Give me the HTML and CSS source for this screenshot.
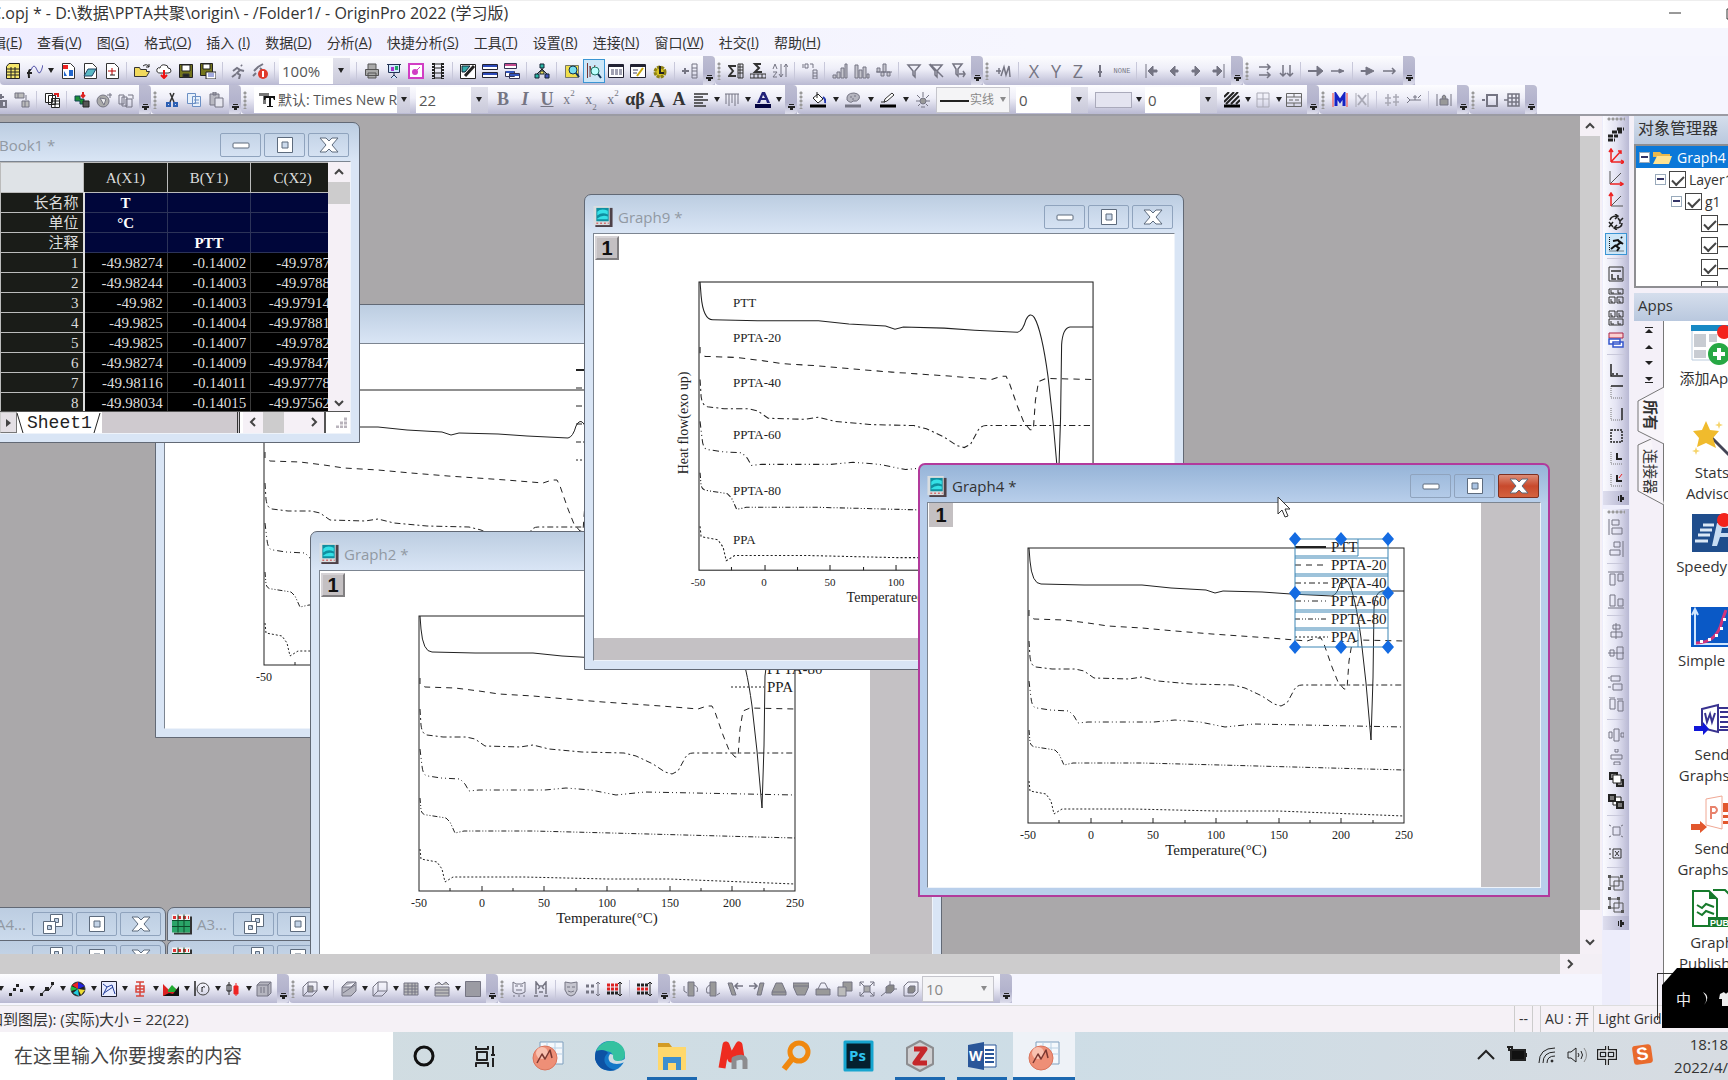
FILE: index.html
```html
<!DOCTYPE html>
<html lang="zh-CN">

<head>
    <meta charset="utf-8">
    <meta name="viewport" content="width=device-width">
    <title>OriginPro 2022</title>
    <link rel="stylesheet" href="styles.css">
</head>

<body>
    <svg class="defs" aria-hidden="true">
        <!-- DSC curves, shared by every graph window: 376 x 275 plot box -->
        <g id="curves">
            <rect width="376" height="275"/>
            <path d="M1 0L2 13Q4 36 13 36L56 37H114L143 40L178 42L187 45L195 43L234 44L263 46L304 48Q309 47 312 36Q316 28 320 34Q327 46 333 90L338 135L343 192L345 130L346 60Q347 44 354 43H376"/>
            <path stroke-dasharray="6 5" d="M1 62V68L6 71L36 72L60 75L80 78L114 80L147 83L184 86L242 90L267 92L279 93L288 90L293 90L296 96L304 119L310 134L316 141H319L321 113L324 95L331 92L376 93"/>
            <path stroke-dasharray="6 3 2 3" d="M1 93L2 109Q3 118 8 119L24 121L47 121L56 123L66 130L101 131L114 129L130 133L163 136L205 137L217 140L234 148L246 156L253 158L259 155L265 144Q268 137 274 137H376"/>
            <path stroke-dasharray="6 3 1 3 1 3" d="M1 133L3 150Q4 160 9 160L22 162L41 163L46 168L50 175L60 174H126L147 172L172 174L197 179L226 176L376 179"/>
            <path stroke-dasharray="5 2 1 2 1 2" d="M1 182L2 194Q3 199 8 199L27 202L31 206L36 217L45 215H114L192 217L376 222"/>
            <path stroke-dasharray="2 2" d="M1 233L2 243L18 246L23 253L26 266L34 261H105L188 263H250L376 268"/>
            <path d="M63 275v-5m62 5v-5m63 5v-5m63 5v-5m62 5v-5M31 275v-3m63 3v-3m63 3v-3m62 3v-3m63 3v-3m63 3v-3"/>
        </g>
        <g id="axis-text" class="axis">
            <text x="0" y="291">-50</text><text x="63" y="291">0</text><text x="125" y="291">50</text>
            <text x="188" y="291">100</text><text x="251" y="291">150</text><text x="313" y="291">200</text>
            <text x="376" y="291">250</text><text class="axis-title" x="188" y="307">Temperature(°C)</text>
        </g>
        <g id="legend">
            <path stroke-width="2" d="M0 0H31"/><path stroke-dasharray="6 5" d="M0 18H33"/><path stroke-dasharray="6 3 2 3" d="M0 36H33"/>
            <path stroke-dasharray="6 3 1 3 1 3" d="M0 54H33"/><path stroke-dasharray="5 2 1 2 1 2" d="M0 72H33"/><path stroke-dasharray="2 2" d="M0 90H33"/>
            <text x="36" y="5">PTT</text><text x="36" y="23">PPTA-20</text><text x="36" y="41">PPTA-40</text>
            <text x="36" y="59">PPTA-60</text><text x="36" y="77">PPTA-80</text><text x="36" y="95">PPA</text>
        </g>
        <symbol id="graph-icon" viewBox="0 0 20 22">
            <path fill="#4d4148" d="M2 2h18v20H2z"/><path fill="#d9dde0" d="M0 0h17v20H0z"/><path fill="#0f8fa0" d="M3 2h13v14H3z"/>
            <path fill="#35e0e6" d="M4 6q4-4 11-1v4q-6-3-11 1zM4 13q5-4 11-2v3H4z"/><path stroke="#c33" stroke-dasharray="2 2" d="M3 18h13"/>
        </symbol>
        <symbol id="sheet-icon" viewBox="0 0 20 20">
            <path fill="#333" d="M2 2h18v18H2z"/><path fill="#f2f2f2" d="M0 0h18v18H0z"/><path fill="#2aa468" d="M0 6h18v12H0z"/>
            <path stroke="#d33" stroke-width="3" stroke-dasharray="3 2" d="M1 3h16"/><path stroke="#0c4a2a" d="M0 6h18M0 12h18M6 0v18M12 0v18"/>
        </symbol>
        <symbol id="w-min" viewBox="0 0 20 20"><rect x="2" y="8" width="16" height="5" rx="1" fill="#fff" stroke="#5d6b7d"/></symbol>
        <symbol id="w-max" viewBox="0 0 20 20"><path fill="#fff" stroke="#5d6b7d" fill-rule="evenodd" d="M2.500 2.500h15v15h-15zM7 7h6v6H7z"/></symbol>
        <symbol id="w-close" viewBox="0 0 20 20"><path fill="#fff" stroke="#5d6b7d" d="M1 3h6l3 3 3-3h6l-6 7 6 7h-6l-3-3-3 3H1l6-7z"/></symbol>
        <symbol id="w-restore" viewBox="0 0 20 20"><g fill="#fff" stroke="#5d6b7d" fill-rule="evenodd"><path d="M7.500 .5h12v12h-12zM11.500 4.500h4v4h-4z"/><path d="M.5 7.500h12v12H.5zM4.500 11.500h4v4h-4z"/></g></symbol>
        <symbol id="origin-logo" viewBox="0 0 32 32">
            <path fill="#f4f8fc" stroke="#7f9fbe" d="M8 2h23v22H8z"/><path stroke="#b9d0e4" d="M8 8h23M8 14h23M15 2v22M23 2v22"/>
            <circle cx="13" cy="18" r="12" fill="#ee8f77" stroke="#d9745c"/><circle cx="10" cy="13" r="6" fill="#f9c1b0" stroke="none"/><path fill="none" stroke="#7a3730" stroke-width="1.500" d="M5 23l5-9 3 5 5-9 2 8"/>
        </symbol>
    </svg>

    <header class="titlebar">
        <h1>C.opj * - D:\数据\PPTA共聚\origin\ - /Folder1/ - OriginPro 2022 (学习版)</h1>
        <button aria-label="最小化"><svg><path d="M2 6h12"/></svg></button>
        <button aria-label="最大化"><svg><path d="M2 2h10v10H2z"/></svg></button>
    </header>

    <nav class="menu">
        <button>编辑(<u>E</u>)</button><button>查看(<u>V</u>)</button><button>图(<u>G</u>)</button><button>格式(<u>O</u>)</button>
        <button>插入 (<u>I</u>)</button><button>数据(<u>D</u>)</button><button>分析(<u>A</u>)</button><button>快捷分析(<u>S</u>)</button>
        <button>工具(<u>T</u>)</button><button>设置(<u>R</u>)</button><button>连接(<u>N</u>)</button><button>窗口(<u>W</u>)</button>
        <button>社交(<u>I</u>)</button><button>帮助(<u>H</u>)</button>
    </nav>

    <div class="bars">
        <div class="bar first">
            <button aria-label="新建工作簿"><svg><path fill="#f5e66b" stroke="#222" d="M1.500 3.500L4 .5h10.500v15h-13zM2 6h12M2 9h12M2 12h12M6 4v11M10 4v11"/></svg></button>
            <button aria-label="新建函数"><svg><path stroke="#222" stroke-width="2" d="M4 7Q1 6 2 15M0 10h5"/><path stroke="#55a" d="M4 7q3-8 6 0t6-5"/></svg></button><button class="dd" aria-label="更多函数"></button><i class="sp"></i>
            <button aria-label="新建Excel"><svg><path fill="#fff" stroke="#333" d="M2.500 .5h8l4 4v11h-12z"/><path fill="#e22" stroke="none" d="M3 2h5v4H3z"/><path fill="#26c" stroke="none" d="M4 8l3 5H4zM9 7h4v6H9z"/></svg></button>
            <button aria-label="新建布局"><svg><path fill="#fff" stroke="#333" d="M2.500 .5h8l4 4v11h-12z"/><path fill="#59b8c4" stroke="#246" d="M6 6h8l-4 7H2z"/></svg></button>
            <button aria-label="新建备注"><svg><path fill="#fff" stroke="#333" d="M2.500 .5h8l4 4v11h-12z"/><path stroke="#b00" d="M8 5v7M4 8h8"/><path stroke="#222" d="M6 12h5"/></svg></button><i class="sep"></i>
            <button aria-label="打开"><svg><path fill="#f1d95c" stroke="#333" d="M.5 13.500v-9h5l1 2h6v2h3l-3 5z"/><path stroke="#222" d="M9 3q4-3 6 1m0-3v3h-3"/></svg></button>
            <button aria-label="云"><svg><path fill="#fff" stroke="#333" d="M4 10q-4 0-3-4 1-2 3-1 1-4 5-3 3 0 3 3 3 0 3 3 0 2-3 2z"/><path stroke="#e11" stroke-width="2" d="M8 7v8M5 12l3 3 3-3"/></svg></button>
            <button aria-label="保存"><svg><path fill="#74751c" stroke="#222" d="M1.500 1.500h13v13h-13z"/><path fill="#fff" stroke="#222" d="M4 2h8v6H4z"/><path fill="#222" d="M5 11h6v3H5z"/></svg></button>
            <button aria-label="保存模板"><svg><path fill="#74751c" stroke="#222" d="M.5 .5h12v12H.5z"/><path fill="#fff" stroke="#222" d="M3 1h7v5H3zM6 9h10v7H6z"/><path stroke="#45b" d="M8 11h6M8 13h6"/></svg></button><i class="sep"></i>
            <button class="off" aria-label="重新计算"><svg><path stroke-width="2" d="M11 2l1 1M3 8l4-3 3 2-3 3 3 2-1 4M6 11l-4 3M10 7l4 1"/></svg></button>
            <button class="off" aria-label="停止计算"><svg><path stroke-width="2" d="M11 1L6 4 2 8M8 5l2 2M4 10l-3 3"/><circle cx="11" cy="11" r="5" fill="#e0392b" stroke="none"/><path stroke="#fff" stroke-width="2" d="M11 8v6"/></svg></button><i class="sep"></i>
            <label class="combo zoom"><select aria-label="缩放"><option>100%</option></select></label><i class="sep"></i>
            <button class="off" aria-label="打印"><svg><path fill="#aaa" stroke="#555" d="M4 6V1h8v5M1.500 6.500h13v6h-13zM4 10h8v5H4z"/></svg></button>
            <button aria-label="幻灯片"><svg><path fill="#cfe6ff" stroke="#235" d="M1 1.500h14M2.500 1.500v8h11v-8M8 10v2M5 15l3-3 3 3"/><path fill="#a3c" stroke="none" d="M5 4h3v4H5z"/><path fill="#2a6" stroke="none" d="M9 3h3v4H9z"/></svg></button>
            <button aria-label="视频"><svg><path fill="#fff" stroke="#d13ec4" stroke-width="2" d="M1 1h14v14H1z"/><circle cx="7" cy="9" r="3" fill="#d13ec4" stroke="none"/><path stroke="#d13ec4" d="M9 7l3-3"/></svg></button>
            <button aria-label="动画"><svg><path stroke="#222" stroke-width="2" d="M3 0v16M13 0v16" stroke-dasharray="2 1"/><path stroke="#222" d="M4.500 0v16M11.500 0v16M4 1h8M4 5h8M4 10h8M4 15h8"/></svg></button><i class="sep"></i>
            <button aria-label="自定义"><svg><path fill="#fff" stroke="#222" d="M.5 1.500h15v14H.5z"/><path fill="#3aa" stroke="#123" d="M2 3h8l-5 6H2z"/><path stroke="#222" stroke-width="3" d="M5 13l9-10"/></svg></button>
            <button aria-label="并排"><svg><path fill="#fff" stroke="#223" d="M.5 1.500h15v5H.5zM.5 9.500h15v5H.5z"/><path stroke="#2c49b8" stroke-width="2" d="M1 3h14M1 11h14"/></svg></button>
            <button aria-label="层叠"><svg><path fill="#fff" stroke="#335" d="M.5 .5h12v5H.5zM1.500 8.500h9v5h-9zM5.500 10.500h10v5h-10z"/><path stroke="#c24b8e" stroke-width="2" d="M1 2h11"/><path stroke="#35b" stroke-width="2" d="M2 9h8M6 12h9"/></svg></button><i class="sep"></i>
            <button aria-label="项目管理器"><svg><path stroke="#222" d="M8 4v4M3 11l5-5 5 5"/><path fill="#2bb6a6" stroke="#123" d="M6 1h4v4H6zM1 11h4v4H1z"/><path fill="#e9dc58" stroke="#123" d="M6 8h4v3H6z"/><path fill="#45b" stroke="#123" d="M11 11h4v4h-4z"/></svg></button><i class="sep"></i>
            <button aria-label="快速帮助"><svg><path fill="#f0de4b" stroke="#776" d="M1.500 2.500h13v12h-13z"/><circle cx="9" cy="7" r="4" fill="#7de" stroke="#135"/><path stroke="#135" stroke-width="2" d="M12 10l3 4"/></svg></button>
            <button class="on" aria-label="对象管理器"><svg><path stroke="#733" d="M1.500 0v15M4 14V3l2 8 3-9"/><circle cx="9" cy="8" r="4" fill="#bff" stroke="#276"/><path stroke="#135" stroke-width="2" d="M12 11l3 4"/></svg></button>
            <button aria-label="消息日志"><svg><path fill="#fff" stroke="#223" d="M.5 1.500h15v13H.5z"/><path stroke="#223" stroke-width="2" d="M1 3h14"/><path stroke="#446" stroke-dasharray="3 1" d="M3 7h11M3 9h11M3 11h11"/></svg></button>
            <button aria-label="脚本窗口"><svg><path fill="#fff" stroke="#223" d="M.5 1.500h15v13H.5z"/><path stroke="#223" stroke-width="2" d="M1 3h14"/><path stroke="#446" d="M3 7h5M3 10h4"/><path stroke="#c9a70a" stroke-width="2" d="M7 13l6-8"/></svg></button>
            <button aria-label="代码生成器"><svg><circle cx="8" cy="9" r="5" fill="#d8c423" stroke="#8f8214" stroke-width="3" stroke-dasharray="3 1"/><path stroke="#222" stroke-width="2" d="M8 3v7h4"/></svg></button><i class="sep"></i>
            <button class="off" aria-label="添加列"><svg><path stroke-width="2" d="M0 8h7M3 5v6"/><path d="M10 1h5v14h-5zM10 5h5M10 8h5M10 12h5"/></svg></button>
            <button class="more" aria-label="工具栏选项"></button>
        </div>
        <div class="bar">
            <i class="grip"></i>
            <button aria-label="列统计"><svg><path stroke="#333" stroke-width="2" d="M8 3H1l4 5-4 5h7"/><path stroke="#333" d="M10 1h5v14h-5zM10 4h5M10 7h5M10 10h5M12 1v14"/></svg></button>
            <button aria-label="行统计"><svg><path stroke="#333" stroke-width="2" d="M11 1H5l4 4-4 4h7"/><path stroke="#333" d="M0 11h16v4H0zM4 11v4M8 11v4M12 11v4"/></svg></button>
            <button class="off" aria-label="排序"><svg><path d="M1 6l2-5 2 5M1 9h4l-4 5h4M9 1v13m-2-3l2 3 2-3M14 14V1m-2 3l2-3 2 3"/></svg></button><i class="sep"></i>
            <button class="off" aria-label="设置值"><svg><path d="M1 1v4M3 1h3v4H3zM8 1h3v4M11 7h4v9h-4zM11 10h4M11 13h4"/></svg></button><i class="sep"></i>
            <button class="off" aria-label="直方图"><svg><path fill="#c5c5ce" d="M1 15v-3h3v3zM5 15V9h3v6zM9 15V5h3v10zM13 15V1h2v14z"/></svg></button>
            <button class="off" aria-label="柱状统计"><svg><path fill="#c5c5ce" d="M1 15V2h3v13zM5 15V7h3v8zM9 15V4h3v11zM13 15v-4h2v4z"/></svg></button>
            <button class="off" aria-label="正负柱"><svg><path fill="#c5c5ce" d="M1 9V5h3v4zM5 13V9h3v4zM7 9V1h3v8zM11 13V9h3v4zM0 9h16"/></svg></button><i class="sep"></i>
            <button class="off" aria-label="筛选"><svg><path stroke-width="1.500" d="M2 2h12L9 8v6l-2-2V8z"/></svg></button>
            <button class="off" aria-label="关闭筛选"><svg><path stroke-width="1.500" d="M2 2h12L9 8v6l-2-2V8zM2 1l13 13"/></svg></button>
            <button class="off" aria-label="重新应用筛选"><svg><path stroke-width="1.500" d="M3 1h9L8 6v7L6 11V6zM9 11h6m-2-3l2 3-2 3"/></svg></button>
            <button class="more" aria-label="工具栏选项"></button>
        </div>
        <div class="bar">
            <i class="grip"></i>
            <button class="off" aria-label="快速拟合"><svg><path stroke-width="1.500" d="M0 8h5M3 5v6M5 13l3-9 2 8 3-9 1 11"/></svg></button><i class="sep"></i>
            <button class="off glyph">X</button><button class="off glyph">Y</button><button class="off glyph">Z</button>
            <button class="off" aria-label="误差棒"><svg><path stroke-width="2" d="M8 2v12M6 9h4M7 5h2"/></svg></button>
            <button class="off tiny">NONE</button><i class="sep"></i>
            <button class="off" aria-label="首列"><svg><path fill="currentColor" d="M2 1v14M4 8l5-5v4h4v2H9v4z"/></svg></button>
            <button class="off" aria-label="左移"><svg><path fill="currentColor" d="M4 8l5-5v4h3v2H9v4z"/></svg></button>
            <button class="off" aria-label="右移"><svg><path fill="currentColor" d="M12 8L7 3v4H4v2h3v4z"/></svg></button>
            <button class="off" aria-label="末列"><svg><path fill="currentColor" d="M14 1v14M12 8L7 3v4H3v2h4v4z"/></svg></button>
            <button class="more" aria-label="工具栏选项"></button>
        </div>
        <div class="bar">
            <i class="grip"></i>
            <button class="off" aria-label="水平箭头"><svg><path stroke-width="1.500" d="M3 4h11m-3-3l3 3-3 3M3 12h11m-3-3l3 3-3 3"/></svg></button>
            <button class="off" aria-label="垂直箭头"><svg><path stroke-width="1.500" d="M5 2v11m-3-3l3 3 3-3M12 2v11m-3-3l3 3 3-3"/></svg></button><i class="sep"></i>
            <button class="off" aria-label="大箭头"><svg><path fill="currentColor" d="M0 7.500h9V3l6 5-6 5V8.500H0z"/></svg></button>
            <button class="off" aria-label="小箭头"><svg><path fill="currentColor" d="M1 8h8V6l5 2-5 2V8z"/></svg></button><i class="sep"></i>
            <button class="off" aria-label="粗箭头"><svg><path fill="currentColor" d="M1 7.500h5V4l8 4-8 4V8.500H1z"/></svg></button>
            <button class="off" aria-label="细箭头"><svg><path stroke-width="1.500" d="M1 8h12m-3-3l3 3-3 3"/></svg></button>
            <button class="more" aria-label="工具栏选项"></button>
        </div>
    </div>

    <div class="bars">
        <div class="bar cut">
            <button class="off" aria-label="追加"><svg><path stroke-width="2" d="M9 2v5M6 5h6M4 9h4v6H4zM10 9h4v6h-4z"/></svg></button>
            <button class="off" aria-label="合并图表"><svg><path fill="#bbb" d="M1 1h9v5H1zM8 9h7v6H8zM12 3v5M4 1v5M11 9v6"/></svg></button><i class="sep"></i>
            <button aria-label="批处理"><svg><path fill="#fff" stroke="#222" d="M1.500 1.500h7v9h-7zM4.500 3.500h7v9h-7zM7.500 6.500h8v9h-8zM8 9h7M8 12h7M11 7v8"/><path stroke="#d22" stroke-width="2" d="M10 2h4v3"/></svg></button><i class="sep"></i>
            <button aria-label="发送到"><svg><path fill="#1d8f37" stroke="#145" d="M1 4h5v3h4v5H6V9H1z"/><path fill="#555" stroke="#222" d="M9 9h6v6H9z"/><path stroke="#d22" stroke-width="2" d="M9 0v5M7 3l2 2 2-2"/></svg></button>
            <button class="off" aria-label="更新"><svg><circle cx="7" cy="9" r="6" fill="#aaa"/><path fill="#eee" d="M4 6l6 1-2 6zM11 3h5m-2-2v5"/></svg></button>
            <button class="off" aria-label="复制页"><svg><path d="M1 3h5v9H1zM4 5h5v9H4zM8 7h6v8H8zM10 3h5v4"/></svg></button>
            <button class="more" aria-label="工具栏选项"></button>
        </div>
        <div class="bar">
            <i class="grip"></i>
            <button aria-label="剪切"><svg><path stroke="#333" stroke-width="1.500" d="M10 1L6 10M6 1l4 9"/><path stroke="#2c5fb3" stroke-width="2" d="M3 11h3v3H3zM10 11h3v3h-3z"/></svg></button>
            <button aria-label="复制"><svg><path fill="#e8f1fb" stroke="#6b8fc4" d="M1.500 1.500h8v10h-8zM6.500 4.500h8v10h-8zM8 8h5M8 11h5"/></svg></button>
            <button class="off" aria-label="粘贴"><svg><path fill="#b9b9c2" d="M2 2h9v11H2zM5 0h3v3H5z"/><path fill="#e5e5ee" d="M7 6h8v9H7z"/></svg></button>
            <button class="more" aria-label="工具栏选项"></button>
        </div>
        <div class="bar">
            <i class="grip"></i>
            <label class="combo font"><svg><path fill="#777" stroke="none" d="M0 1h10v3H7v8H4V4H0z"/><path fill="#111" stroke="none" d="M5 4h11v4h-1l-1-2h-2v8h2v1H8v-1h2V6H7L6 8H5z"/></svg><select aria-label="字体"><option>默认: Times New R</option></select></label>
            <label class="combo size"><select aria-label="字号"><option>22</option></select></label>
            <button class="off glyph serif"><b>B</b></button><button class="off glyph serif"><b><i>I</i></b></button><button class="off glyph serif"><b><u>U</u></b></button>
            <button class="off serif">x<sup>2</sup></button><button class="off serif">x<sub>2</sub></button><button class="off serif">x<sup>2</sup></button>
            <button class="glyph serif"><b>αβ</b></button><button class="glyph serif big"><b>A</b></button><button class="glyph serif"><b>A</b></button>
            <button aria-label="对齐"><svg><path stroke="#333" stroke-width="1.500" d="M1 2h14M1 5h9M1 8h14M1 11h9M1 14h12"/></svg></button><button class="dd" aria-label="对齐选项"></button>
            <button class="off" aria-label="竖排"><svg><path d="M2 2v10M5 2v12M8 2v9M11 2v12M14 2v10M1 2h14"/></svg></button><button class="dd" aria-label="竖排选项"></button>
            <button aria-label="字体颜色"><svg><path fill="#24247a" stroke="none" d="M7 0h3l5 11h-3l-1-3H6l-1 3H2zM8 3L7 6h3z"/><path stroke="#050540" stroke-width="4" d="M0 14h16"/></svg></button><button class="dd" aria-label="颜色选项"></button>
            <button class="more" aria-label="工具栏选项"></button>
        </div>
        <div class="bar">
            <i class="grip"></i>
            <button aria-label="填充"><svg><path fill="#fff" stroke="#222" d="M3 6l5-4 5 5-5 4zM7 0v6"/><path stroke="#2438b0" stroke-width="2" d="M13 5q3 2 2 6"/><path stroke="#000" stroke-width="3" d="M0 14h16"/></svg></button><button class="dd wide" aria-label="填充选项"></button>
            <button class="off" aria-label="调色板"><svg><path fill="#b5b5bf" d="M2 8q-1-7 7-7 7 1 5 6-2 3-6 2-2 3-6-1zM5 5h2M9 4h2M7 7h2"/><path stroke-width="3" d="M0 14h16"/></svg></button><button class="dd wide off" aria-label="调色板选项"></button>
            <button aria-label="线条颜色"><svg><path fill="#fff" stroke="#333" d="M4 10l1-3 7-6 2 2-7 6z"/><path stroke="#333" d="M1 10h4"/><path stroke="#000" stroke-width="3" d="M0 14h16"/></svg></button><button class="dd wide" aria-label="线条选项"></button>
            <button class="off" aria-label="发光"><svg><circle cx="8" cy="9" r="3" fill="#999"/><path d="M8 0v5M2 3l3 3M14 3l-3 3M1 9h4M11 9h4M3 14l2-2M13 14l-2-2M6 15h4"/></svg></button>
            <label class="combo line off"><svg><path stroke="#222" stroke-width="2" d="M0 9h29"/></svg><select aria-label="线型"><option>实线</option></select></label>
            <label class="combo size"><select aria-label="线宽"><option>0</option></select></label>
            <button class="swatch" aria-label="颜色"></button><button class="dd wide" aria-label="颜色选项"></button>
            <label class="combo size"><select aria-label="边框"><option>0</option></select></label>
            <button aria-label="图案"><svg><path stroke="#222" stroke-width="2" d="M0 5l5-5M0 10L10 0M2 12L14 0M7 12l8-8M12 12l4-4"/><path stroke="#000" stroke-width="3" d="M0 14h16"/></svg></button><button class="dd" aria-label="图案选项"></button>
            <button class="off light" aria-label="边框"><svg><path d="M2 1h12v14H2zM8 1v14M2 7h12"/></svg></button><button class="dd" aria-label="边框选项"></button>
            <button class="off" aria-label="合并单元格"><svg><path stroke="#666" d="M.5 1.500h15v13H.5zM0 5h16M0 11h16M8 1v4M8 11v4M3 8h4M9 8h4"/></svg></button>
            <button class="more" aria-label="工具栏选项"></button>
        </div>
        <div class="bar">
            <i class="grip"></i>
            <button aria-label="屏蔽"><svg><path stroke="#e77" stroke-width="1.500" d="M1 1v14M15 1v14"/><path stroke="#1522c4" stroke-width="3" d="M4 14V3l4 6 4-6v11"/></svg></button>
            <button class="off light" aria-label="取消屏蔽"><svg><path stroke-width="2" d="M4 3l8 10M12 3L4 13"/><path d="M2 1v14M14 1v14"/></svg></button><i class="sep"></i>
            <button class="off light" aria-label="交换"><svg><path stroke-width="1.500" d="M4 2v12M1 6h6M1 11h6M12 2v12M9 5h6M9 10h6"/></svg></button>
            <button class="off" aria-label="移除"><svg><path d="M1 5l3 3-3 3M4 8h11M9 3v5M7 5h4M12 6l3-3"/></svg></button><i class="sep"></i>
            <button class="off" aria-label="锁定"><svg><path fill="#999" d="M4 7h8v6H4zM6 7q0-4 2-4t2 4"/><path d="M1 2v12M15 2v12"/></svg></button>
            <button class="more" aria-label="工具栏选项"></button>
        </div>
        <div class="bar">
            <i class="grip"></i>
            <button class="off" aria-label="添加框"><svg><path stroke-width="2" d="M5 3h10v11H5zM0 8h3"/></svg></button>
            <button class="off" aria-label="添加表"><svg><path stroke-width="1.500" d="M4 2h11v12H4zM4 6h11M4 10h11M8 2v12M12 2v12M0 8h4"/></svg></button>
            <button class="more" aria-label="工具栏选项"></button>
        </div>
    </div>

    <main>
        <div class="left">
            <section class="mdi">
                <div class="desktop">
                    <article class="window back">
                        <div class="caption"></div>
                        <div class="client">
                            <svg class="page"><g transform="translate(99 46)"><use href="#curves"/><use href="#axis-text"/><use href="#legend" x="312" y="-20"/></g></svg>
                        </div>
                    </article>

                    <article class="window mini a4"><div class="caption"><svg class="ico"><use href="#sheet-icon"/></svg><h2>A4...</h2><button aria-label="还原"><svg><use href="#w-restore"/></svg></button><button aria-label="最大化"><svg><use href="#w-max"/></svg></button><button aria-label="关闭"><svg><use href="#w-close"/></svg></button></div></article>
                    <article class="window mini a3"><div class="caption"><svg class="ico"><use href="#sheet-icon"/></svg><h2>A3...</h2><button aria-label="还原"><svg><use href="#w-restore"/></svg></button><button aria-label="最大化"><svg><use href="#w-max"/></svg></button><button aria-label="关闭"><svg><use href="#w-close"/></svg></button></div></article>
                    <article class="window mini a4 low"><div class="caption"><svg class="ico"><use href="#sheet-icon"/></svg><h2></h2><button aria-label="还原"><svg><use href="#w-restore"/></svg></button><button aria-label="最大化"><svg><use href="#w-max"/></svg></button><button aria-label="关闭"><svg><use href="#w-close"/></svg></button></div></article>
                    <article class="window mini a3 low"><div class="caption"><svg class="ico"><use href="#sheet-icon"/></svg><h2></h2><button aria-label="还原"><svg><use href="#w-restore"/></svg></button><button aria-label="最大化"><svg><use href="#w-max"/></svg></button><button aria-label="关闭"><svg><use href="#w-close"/></svg></button></div></article>

                    <article class="window graph2">
                        <div class="caption"><svg class="ico"><use href="#graph-icon"/></svg><h2>Graph2 *</h2></div>
                        <div class="client">
                            <svg class="page"><g transform="translate(99 45)"><use href="#curves"/><use href="#axis-text"/><use href="#legend" x="312" y="-19"/></g></svg>
                            <button class="layer">1</button>
                        </div>
                    </article>

                    <article class="window book">
                        <div class="caption"><h2>Book1 *</h2><button aria-label="最小化"><svg><use href="#w-min"/></svg></button><button aria-label="最大化"><svg><use href="#w-max"/></svg></button><button aria-label="关闭"><svg><use href="#w-close"/></svg></button></div>
                        <div class="client">
                            <div class="sheet">
                                <table>
                                    <thead>
                                        <tr><th class="corner"></th><th>A(X1)</th><th>B(Y1)</th><th>C(X2)</th></tr>
                                    </thead>
                                    <tbody class="info">
                                        <tr><th>长名称</th><td>T</td><td></td><td></td></tr>
                                        <tr><th>单位</th><td>°C</td><td></td><td></td></tr>
                                        <tr><th>注释</th><td></td><td>PTT</td><td></td></tr>
                                    </tbody>
                                    <tbody>
                                        <tr><th>1</th><td>-49.98274</td><td>-0.14002</td><td>-49.9787</td></tr>
                                        <tr><th>2</th><td>-49.98244</td><td>-0.14003</td><td>-49.9788</td></tr>
                                        <tr><th>3</th><td>-49.982</td><td>-0.14003</td><td>-49.97914</td></tr>
                                        <tr><th>4</th><td>-49.9825</td><td>-0.14004</td><td>-49.97881</td></tr>
                                        <tr><th>5</th><td>-49.9825</td><td>-0.14007</td><td>-49.9782</td></tr>
                                        <tr><th>6</th><td>-49.98274</td><td>-0.14009</td><td>-49.97847</td></tr>
                                        <tr><th>7</th><td>-49.98116</td><td>-0.14011</td><td>-49.97778</td></tr>
                                        <tr><th>8</th><td>-49.98034</td><td>-0.14015</td><td>-49.97562</td></tr>
                                    </tbody>
                                </table>
                                <div class="scroll-v"><button aria-label="向上"><svg><path d="M4 10l4-4 4 4"/></svg></button><i class="thumb"></i><button aria-label="向下"><svg><path d="M4 6l4 4 4-4"/></svg></button></div>
                            </div>
                            <div class="tabs">
                                <button class="next" aria-label="下一个"></button>
                                <button class="tab"><svg><path d="M0 0l6 20"/></svg>Sheet1<svg><path d="M8 0L2 20"/></svg></button>
                                <span class="fill"></span>
                                <div class="scroll-h"><button aria-label="向左"><svg><path d="M10 4L6 8l4 4"/></svg></button><i class="thumb"></i><button aria-label="向右"><svg><path d="M6 4l4 4-4 4"/></svg></button></div>
                                <svg class="size-grip"><path stroke="#b9b4bc" stroke-width="3" stroke-dasharray="3 1" d="M4 15h12M8 11h8M12 7h4"/></svg>
                            </div>
                        </div>
                    </article>

                    <article class="window graph9">
                        <div class="caption"><svg class="ico"><use href="#graph-icon"/></svg><h2>Graph9 *</h2><button aria-label="最小化"><svg><use href="#w-min"/></svg></button><button aria-label="最大化"><svg><use href="#w-max"/></svg></button><button aria-label="关闭"><svg><use href="#w-close"/></svg></button></div>
                        <div class="client">
                            <svg class="page">
                                <use href="#curves" transform="translate(105 48) scale(1.048)"/>
                                <g class="names">
                                    <text x="139" y="73">PTT</text><text x="139" y="108">PPTA-20</text><text x="139" y="153">PPTA-40</text>
                                    <text x="139" y="205">PPTA-60</text><text x="139" y="261">PPTA-80</text><text x="139" y="310">PPA</text>
                                </g>
                                <g class="axis nine">
                                    <text x="104" y="352">-50</text><text x="170" y="352">0</text><text x="236" y="352">50</text><text x="302" y="352">100</text><text x="368" y="352">150</text>
                                    <text class="axis-title" x="300" y="368">Temperature(°C)</text>
                                    <text class="axis-title" transform="translate(94 189) rotate(-90)">Heat flow(exo up)</text>
                                </g>
                            </svg>
                            <button class="layer">1</button>
                        </div>
                    </article>

                    <article class="window graph4 active">
                        <div class="caption"><svg class="ico"><use href="#graph-icon"/></svg><h2>Graph4 *</h2><button aria-label="最小化"><svg><use href="#w-min"/></svg></button><button aria-label="最大化"><svg><use href="#w-max"/></svg></button><button class="close" aria-label="关闭"><svg><use href="#w-close"/></svg></button></div>
                        <div class="client">
                            <svg class="page">
                                <g transform="translate(100 45)"><use href="#curves"/><use href="#axis-text"/><use href="#legend" x="267" y="-1"/></g>
                                <g class="selection" transform="translate(367 36)">
                                    <path d="M0 0H93V108H0zM0 17h63V0M0 19h93M0 35h93M0 37h93M0 53h93M0 55h93M0 71h93M0 73h93M0 89h93M0 91h63V108"/>
                                    <path class="handles" d="M0-7l6 7-6 7-6-7zM46-7l6 7-6 7-6-7zM93-7l6 7-6 7-6-7zM0 47l6 7-6 7-6-7zM93 47l6 7-6 7-6-7zM0 101l6 7-6 7-6-7zM46 101l6 7-6 7-6-7zM93 101l6 7-6 7-6-7z"/>
                                </g>
                            </svg>
                            <button class="layer">1</button>
                        </div>
                    </article>
                    <svg class="cursor"><path fill="#fff" stroke="#333" d="M1 1v17l4-4 3 7 3-1-3-7h5z"/></svg>
                </div>
                <div class="scroll-v"><button aria-label="向上"><svg><path d="M4 10l4-4 4 4"/></svg></button><i class="thumb"></i><button aria-label="向下"><svg><path d="M4 6l4 4 4-4"/></svg></button></div>
                <div class="scroll-h"><i class="thumb"></i><button aria-label="向右"><svg><path d="M6 4l4 4-4 4"/></svg></button></div>
            </section>

            <div class="bars bottom">
                <div class="bar plot">
                    <button class="dd" aria-label="折线"></button>
                    <button aria-label="散点"><svg><path fill="#222" stroke="none" d="M1 12h3v3H1zM5 7h3v3H5zM8 3h3v3H8zM12 8h3v3h-3z"/></svg></button><button class="dd" aria-label="散点选项"></button>
                    <button aria-label="点线"><svg><path stroke="#222" d="M2 14l5-6 3 1 4-6"/><path fill="#222" stroke="none" d="M1 12h3v3H1zM6 6h4v4H6zM12 1h3v3h-3z"/></svg></button><button class="dd" aria-label="点线选项"></button>
                    <button aria-label="饼图"><svg><circle cx="8" cy="8" r="7" fill="#222"/><g stroke="none"><path fill="#e22" d="M8 8L2 4l6-3z"/><path fill="#22d" d="M8 8V1l7 4z"/><path fill="#2b4" d="M8 8L1 10V5z"/><path fill="#ed3" d="M8 8l7 1-4 5z"/><path fill="#2cd" d="M8 8l1 7-6-3z"/></g></svg></button><button class="dd" aria-label="饼图选项"></button>
                    <button aria-label="多面板"><svg><path fill="#e8ecff" stroke="#223" d="M.5 .5h15v15H.5z"/><path stroke="#223c9a" d="M2 3l4 3 5-2 3 9M2 14l4-8M3 12l9-6"/></svg></button><button class="dd" aria-label="多面板选项"></button>
                    <button aria-label="箱线图"><svg><path stroke="#d8453c" stroke-width="1.500" d="M4 1h8M8 1v14M4 15h8M4 5h8v6H4zM4 8h8"/></svg></button><button class="dd" aria-label="箱线选项"></button>
                    <button aria-label="面积图"><svg><path fill="#d22" stroke="none" d="M0 3l6 6 4-3 6 4v5H0z"/><path fill="#2a3" stroke="none" d="M5 9l4-5 4 4v3H5z"/><path fill="#111" stroke="none" d="M0 15l6-3 4 1 6-8v10z"/></svg></button><button class="dd" aria-label="面积选项"></button>
                    <button aria-label="极坐标"><svg><path stroke="#222" stroke-width="1.500" d="M1 0v15"/><circle cx="9" cy="8" r="6" stroke="#444"/><path stroke="#222" d="M8 11V6m0 1q1-2 3-1"/></svg></button><button class="dd" aria-label="极坐标选项"></button>
                    <button aria-label="股价图"><svg><path stroke="#222" d="M4 1v13M2 4h4v6H2z"/><path fill="#e22" stroke="#e22" d="M11 2v13M9 5h4v8H9z"/></svg></button><button class="dd" aria-label="股价选项"></button>
                    <button class="off" aria-label="三维"><svg><path fill="#b5b5bf" d="M1 4l3-3h11v11l-3 3H1zM1 4h11v11M12 4l3-3M5 6v6M8 6v6"/></svg></button>
                    <button class="more" aria-label="工具栏选项"></button>
                </div>
                <div class="bar">
                    <i class="grip"></i>
                    <button class="off" aria-label="三维散点"><svg><path d="M1 6l5-5h9v9l-5 5H1zM6 1v9l-5 5M6 10h9"/><path fill="#999" d="M6 5h5v6H6z"/></svg></button><button class="dd" aria-label="选项"></button><i class="sep"></i>
                    <button class="off" aria-label="三维曲面"><svg><path fill="#b5b5bf" d="M1 6l5-5h9l-5 5zM1 6v9h9l5-5V1M2 12L14 4"/></svg></button><button class="dd" aria-label="选项"></button>
                    <button class="off" aria-label="三维线框"><svg><path d="M1 6l5-5h9v9l-5 5H1zM6 1v9l-5 5M6 10h9"/></svg></button><button class="dd" aria-label="选项"></button>
                    <button class="off" aria-label="热图"><svg><path fill="#bbb" d="M1 2h14v12H1zM1 5h14M1 8h14M1 11h14M5 2v12M9 2v12M12 2v12"/></svg></button><button class="dd" aria-label="选项"></button>
                    <button class="off" aria-label="等高线"><svg><path fill="#bbb" d="M1 6h14v9H1zM1 9h14M1 12h14M1 4l4-3 3 3 4-3 3 3"/></svg></button><button class="dd" aria-label="选项"></button>
                    <button class="off" aria-label="图像"><svg><path fill="#9b9ba3" d="M.5 .5h15v15H.5z"/></svg></button>
                    <button class="more" aria-label="工具栏选项"></button>
                </div>
                <div class="bar">
                    <i class="grip"></i>
                    <button class="off" aria-label="屏蔽点"><svg><path d="M2 1v10q6 4 12 0V1l-3 2H5zM4 5h3M9 5h3M5 9h6M2 15h2M7 15h2M12 15h2"/></svg></button>
                    <button class="off" aria-label="屏蔽区域"><svg><path stroke-width="1.500" d="M3 13V1l3 4h4l3-4v12M5 8l2-2M9 6l2 2M6 11h4M1 15h4M11 15h4"/></svg></button><i class="sep"></i>
                    <button class="off" aria-label="面具"><svg><path fill="#c5c5cf" d="M2 1q6 2 12 0v8q-2 6-6 6t-6-6zM4 6h3M9 6h3M5 10q3 2 6 0"/></svg></button>
                    <button class="off" aria-label="隐藏点"><svg><path stroke-width="3" stroke-dasharray="3 2" d="M1 5h9M1 11h9"/><path d="M13 1v14M11 3l2-2 2 2M11 13l2 2 2-2"/></svg></button>
                    <button aria-label="显示点"><svg><path stroke="#d22" stroke-width="3" stroke-dasharray="3 1" d="M0 4h11M0 8h11"/><path stroke="#222" stroke-width="3" stroke-dasharray="3 1" d="M0 12h11"/><path stroke="#222" d="M13 1v14M11 3l2-2 2 2M11 13l2 2 2-2"/></svg></button><i class="sep"></i>
                    <button aria-label="交换屏蔽"><svg><path stroke="#222" stroke-width="3" stroke-dasharray="3 1" d="M0 4h11M0 12h11"/><path stroke="#d22" stroke-width="3" stroke-dasharray="3 1" d="M0 8h11"/><path stroke="#222" d="M13 1v14M11 3l2-2 2 2M11 13l2 2 2-2"/></svg></button>
                    <button class="more" aria-label="工具栏选项"></button>
                </div>
                <div class="bar">
                    <i class="grip"></i>
                    <button class="off" aria-label="左旋"><svg><path fill="#999" d="M5 1h6v14H5z"/><path d="M1 5v5l3 2M11 4q5 2 3 7"/></svg></button>
                    <button class="off" aria-label="右旋"><svg><path fill="#999" d="M5 1h6v14H5z"/><path d="M15 12l-3 2M5 4q-5 2-3 8h3"/></svg></button>
                    <button class="off" aria-label="左倾"><svg><path fill="#999" d="M1 2h4l4 12H5z"/><path stroke-width="1.500" d="M8 5h8m-5-3L8 5l3 3"/></svg></button>
                    <button class="off" aria-label="右倾"><svg><path fill="#999" d="M11 2h4l-3 12H8z"/><path stroke-width="1.500" d="M0 5h8M5 2l3 3-3 3"/></svg></button>
                    <button class="off" aria-label="增大透视"><svg><path fill="#999" d="M5 2h6l4 9v3H1v-3zM1 11h14"/></svg></button>
                    <button class="off" aria-label="减小透视"><svg><path fill="#999" d="M0 2h16v3l-4 9H4L0 5zM0 5h16"/></svg></button>
                    <button class="off" aria-label="透视"><svg><path fill="#999" d="M1 8h14v6H1z"/><path d="M3 8l3-6h4l3 6"/></svg></button>
                    <button class="off" aria-label="层序"><svg><path fill="#999" d="M6 1h9v9H6z"/><path fill="#bbb" d="M1 6h8v9H1z"/></svg></button>
                    <button class="off" aria-label="适应框架"><svg><path fill="#aaa" d="M5 5h6v6H5z"/><path d="M1 5V1h4M11 1h4v4M1 11v4h4M11 15h4v-4M1 1l4 4M15 1l-4 4M1 15l4-4M15 15l-4-4"/></svg></button>
                    <button class="off" aria-label="移动"><svg><path fill="#888" d="M5 6l3-2h5v5l-3 3H5zM0 15l5-4M9 0v4M13 8h3"/></svg></button>
                    <button class="off" aria-label="立方体"><svg><path d="M1 5l4-4h10v10l-4 4H1z"/><path fill="#888" d="M5 7l2-2h5v5l-2 2H5z"/></svg></button>
                    <label class="combo size off"><select aria-label="角度"><option>10</option></select></label>
                    <button class="more" aria-label="工具栏选项"></button>
                </div>
            </div>
        </div>

        <aside class="dock">
            <div class="vbar">
                <i class="grip"></i>
                <button aria-label="刷新"><svg><path stroke="#222" stroke-width="3" stroke-dasharray="5 1" d="M9 3h7M4 6h10M0 10h10M0 14h7"/></svg></button>
                <button aria-label="缩放坐标"><svg><path stroke="#e22" stroke-width="1.500" d="M3 14V1m-2 3l2-3 2 3M3 14h13m-3-2l3 2-3 2M3 14L13 3m-3 0h3v3"/></svg></button>
                <button aria-label="X轴缩放"><svg><path stroke="#555" d="M2 1v13L13 3"/><path stroke="#e22" stroke-width="1.500" d="M2 14h13m-3-2l3 2-3 2"/></svg></button>
                <button aria-label="Y轴缩放"><svg><path stroke="#555" d="M15 14H3L13 4"/><path stroke="#e22" stroke-width="1.500" d="M3 14V1m-2 3l2-3 2 3"/></svg></button>
                <button aria-label="交换坐标轴"><svg><path stroke="#222" stroke-width="1.500" d="M2 6q1-4 7-4M14 9q0 5-7 5M7 0l3 2-3 3M9 11l-3 3 3 2M1 8l4 5M5 8l-4 5M10 4l2 3 3-3M12 7v3"/></svg></button>
                <button class="on" aria-label="加速模式"><svg><path stroke="#111" stroke-dasharray="1 1" d="M1.500 1v14H16"/><path stroke="#111" stroke-width="2" d="M13 1l1 1M5 5l5-1 2 3-4 3 3 2-2 3M8 9l-5 4M11 5l4 3"/></svg></button><i class="sep"></i>
                <button aria-label="合并"><svg><path stroke="#333" d="M1 1h14v14H1z"/><path stroke="#333" stroke-width="1.500" d="M3 5h10M4 8v5h4M10 9v4h4"/></svg></button>
                <button aria-label="四图"><svg><path stroke="#333" d="M1 1h14v5H1zM1 9h6v6H1zM9 9h6v6H9zM3 2v3h3M10 2v3h3M3 11v3h2M11 11v3h2"/></svg></button>
                <button aria-label="五图"><svg><path stroke="#333" d="M1 1h6v6H1zM9 1h6v6H9zM1 9h14v6H1zM3 3v3h2M11 3v3h2M3 11v3h3M10 11v3h3"/></svg></button>
                <button aria-label="模板"><svg><path fill="#fbd0d0" stroke="#a24" d="M1 1h14v5H1z"/><path fill="#fff" stroke="#35c" stroke-width="1.500" d="M1 7h11v5H1zM5 10h10v5H5z"/></svg></button><i class="sep"></i>
                <button aria-label="左下轴"><svg><path stroke="#222" stroke-width="1.500" d="M3 2v12h12M5 11v2M9 11v2"/></svg></button>
                <button aria-label="顶轴"><svg><path stroke="#777" stroke-dasharray="1 1" d="M3 2v12h12"/><path stroke="#222" stroke-width="1.500" d="M3 2h12"/></svg></button>
                <button aria-label="右轴"><svg><path stroke="#777" stroke-dasharray="1 1" d="M3 2v12h12"/><path stroke="#222" stroke-width="1.500" d="M14 2v12"/></svg></button>
                <button aria-label="全框"><svg><path stroke="#222" stroke-width="1.500" stroke-dasharray="2 1" d="M3 2h11v12H3z"/></svg></button>
                <button aria-label="内插图"><svg><path stroke="#777" stroke-dasharray="1 1" d="M3 2v12h12"/><path stroke="#222" stroke-width="2" d="M9 3v6h5"/></svg></button>
                <button aria-label="内插数据图"><svg><path stroke="#777" stroke-dasharray="1 1" d="M3 2v12h12"/><path stroke="#222" stroke-width="2" d="M9 3v6h5"/><path stroke="#e22" d="M11 6l3-4"/></svg></button>
                <button class="more" aria-label="工具栏选项"></button>
            </div>
            <div class="vbar">
                <i class="grip"></i>
                <button class="off" aria-label="左对齐"><svg><path d="M1 0v16M4 1h7v5H4zM4 9h10v6H4z"/></svg></button>
                <button class="off" aria-label="右对齐"><svg><path d="M15 0v16M6 1h6v5H6zM2 9h10v5H2z"/></svg></button><i class="sep"></i>
                <button class="off" aria-label="顶对齐"><svg><path d="M0 1h16M2 3h5v11H2zM10 3h5v7h-5z"/></svg></button>
                <button class="off" aria-label="底对齐"><svg><path d="M0 15h16M2 2h5v11H2zM10 6h5v7h-5z"/></svg></button><i class="sep"></i>
                <button class="off" aria-label="垂直居中"><svg><path d="M5 2h7v4H5zM3 9h11v5H3zM8 0v16"/></svg></button>
                <button class="off" aria-label="水平居中"><svg><path d="M2 5h4v6H2zM9 2h6v12H9zM0 8h16"/></svg></button><i class="sep"></i>
                <button class="off" aria-label="同宽"><svg><path d="M3 1h9v5H3zM5 9h9v6H5zM0 3h2M0 12h3"/></svg></button>
                <button class="off" aria-label="同高"><svg><path d="M2 2h5v10H2zM10 4h5v10h-5zM1 0h6M9 2h6"/></svg></button><i class="sep"></i>
                <button class="off" aria-label="水平分布"><svg><path d="M1 5h3v6H1zM6 2h5v12H6zM13 6h3v4h-3z"/></svg></button>
                <button class="off" aria-label="垂直分布"><svg><path d="M7 0h3v3H7zM3 6h11v4H3zM6 13h6v3H6z"/></svg></button>
                <button aria-label="置前"><svg><path fill="#888" stroke="#222" stroke-width="2" d="M2 2h7v6H2zM9 9h6v6H9z"/><path fill="#fff" stroke="#222" d="M5 4h8v8H5z"/></svg></button>
                <button aria-label="置后"><svg><path fill="#fff" stroke="#222" d="M5 4h8v8H5z"/><path fill="#777" stroke="#222" stroke-width="2" d="M1 2h6v6H1zM9 9h6v6H9z"/></svg></button><i class="sep"></i>
                <button class="off" aria-label="组合"><svg><path d="M5 4h7v8H5zM1 2l2 1M15 2l-2 1M1 14l2-1M15 14l-2-1"/></svg></button>
                <button class="off" aria-label="取消组合"><svg><path stroke="#333" d="M5 4h8v9H5zM7 6l4 5M11 6l-4 5M2 3v2M2 8v2M2 13v1"/></svg></button><i class="sep"></i>
                <button class="off" aria-label="群组"><svg><path stroke="#555" d="M2 2h9v9H2zM6 6h9v9H6z"/><path fill="#555" stroke="none" d="M0 0h3v3H0zM12 0h3v3h-3zM0 12h3v3H0z"/></svg></button>
                <button class="off" aria-label="解组"><svg><path stroke="#555" d="M2 2h9v9H2zM6 6h9v9H6z"/><path fill="#555" stroke="none" d="M0 0h3v3H0zM9 0h3v3H9zM0 9h3v3H0zM13 13h3v3h-3z"/></svg></button>
                <button class="more" aria-label="工具栏选项"></button>
            </div>
        </aside>

        <aside class="panels">
            <section class="tree">
                <h3>对象管理器</h3>
                <ul>
                    <li class="root selected"><i class="fold"></i><svg><path fill="#e9b84c" d="M0 3h7l2 2h8v3H0z"/><path fill="#ffe391" d="M0 15L4 7h15l-3 8z"/></svg>Graph4 - PTT</li>
                    <li class="l1"><i class="fold"></i><label><input type="checkbox" checked>Layer1</label></li>
                    <li class="l2"><i class="fold"></i><label><input type="checkbox" checked>g1</label></li>
                    <li class="l3"><label><input type="checkbox" checked>—</label></li>
                    <li class="l3"><label><input type="checkbox" checked>—</label></li>
                    <li class="l3"><label><input type="checkbox" checked>—</label></li>
                    <li class="l3"><label><input type="checkbox" checked>—</label></li>
                </ul>
            </section>
            <section class="apps">
                <h3>Apps</h3>
                <div class="apps-body">
                    <div class="apps-side">
                        <button aria-label="首个"><svg><path d="M1 1h8v1H1zM5 3l4 4H1z"/></svg></button><button aria-label="上一个"><svg><path d="M5 3l4 4H1z"/></svg></button>
                        <button aria-label="下一个"><svg><path d="M5 7l4-4H1z"/></svg></button><button aria-label="末个"><svg><path d="M1 8h8v1H1zM5 7l4-4H1z"/></svg></button>
                        <button class="side-tab all"><svg><path d="M30 0L4 14V44L30 57"/></svg><span>所有</span></button>
                        <button class="side-tab link"><svg><path d="M17 0L4 6V52L30 66"/></svg><span>连接器</span></button>
                    </div>
                    <ul>
                        <li><a href="#"><svg><path fill="#fff" stroke="#bcd" d="M1 1h38v34H1z"/><path fill="#1789c4" d="M0 0h40v6H0z"/><path fill="#c8ccd2" d="M3 9h12v13H3zM3 25h12v8H3zM18 9h8v8h-8z"/><circle cx="28" cy="29" r="11" fill="#27a844"/><path stroke="#fff" stroke-width="4" d="M28 23v12M22 29h12"/><circle cx="33" cy="7" r="7" fill="#f3231c"/></svg>添加Apps</a></li>
                        <li><a href="#"><svg><path stroke="#445" stroke-width="3" d="M20 18l22 22"/><path fill="#f0bb2d" d="M15 2l4 9 9 1-6 7 3 10-10-5-9 4 2-9-6-7 9-1z"/><path fill="#f6d46b" d="M28 2l1 3 3 1-3 1-1 3-1-3-3-1 3-1zM5 28l1 3 3 1-3 1-1 3-1-3-3-1 3-1z"/></svg>Stats<br>Advisor</a></li>
                        <li><a href="#"><svg><path fill="#1f4d8c" d="M1 1h39v38H1z"/><path stroke="#dbe8f6" stroke-width="3" d="M12 12h11M9 17h12M7 22h12M4 28h13"/><path fill="#c7dcf2" d="M26 10h14v5h-9l-1 5h8v4h-9l-3 9h-5z"/><circle cx="33" cy="7" r="7" fill="#f3231c"/></svg>Speedy Fit</a></li>
                        <li><a href="#"><svg><path fill="#0a59c6" d="M0 0h40v40H0z"/><path stroke="#cfe6ff" stroke-width="2" d="M4 4v33h34M1 8l3-6 3 6"/><path fill="none" stroke="#d0357c" stroke-width="3" d="M5 36Q26 36 31 14L35 3"/><path fill="#fff" d="M9 33h3v3H9zM17 31h3v3h-3zM24 27h3v3h-3zM29 20h3v3h-3zM32 11h3v3h-3z"/></svg>Simple Fit</a></li>
                        <li><a href="#"><svg><path fill="#fff" stroke="#38328f" stroke-width="2" d="M11 8l16-4v27l-16-4zM27 7h14v22H27"/><path stroke="#38328f" stroke-width="2" d="M29 11h10M29 16h10M29 21h10M29 26h10"/><path fill="none" stroke="#38328f" stroke-width="2" d="M14 12l2 9 3-8 2 8 3-9"/><path fill="#1016d8" d="M3 25h9v-4l6 7-6 6v-4H3z"/></svg>Send<br>Graphs …</a></li>
                        <li><a href="#"><svg><path fill="#fff" stroke="#f0a894" d="M15 4l16-3v33l-16-4z"/><path fill="none" stroke="#e8826c" stroke-width="2" d="M20 24V12h4q4 3 0 6h-4"/><path fill="#e2572d" d="M0 29h9v-3l7 6-7 6v-3H0zM32 8h8v9h-8zM32 20h8v3h-8zM32 26h8v3h-8z"/></svg>Send<br>Graphs to</a></li>
                        <li><a href="#"><svg><path fill="#fff" stroke="#177a2c" stroke-width="2" d="M2 2h16l8 8v27H2zM22 1h12l8 8v28H26"/><path fill="none" stroke="#177a2c" stroke-width="2" d="M6 16l5 3 4-4 8 3M6 23l5 3 4-4 8 3"/><path fill="#177a2c" d="M18 2l8 8h-8zM17 28h24v10H17z"/><text class="pub" x="19" y="37">PUB</text></svg>Graph<br>Publisher</a></li>
                    </ul>
                </div>
            </section>
        </aside>
    </main>

    <footer class="status">
        <span class="msg">加到图层): (实际)大小 = 22(22)</span>
        <span class="cell">--</span><span class="cell gap"></span><span class="cell">AU : 开</span><span class="cell grids">Light Grids</span>
    </footer>

    <nav class="taskbar">
        <input class="search" type="text" placeholder="在这里输入你要搜索的内容" aria-label="搜索">
        <button aria-label="Cortana"><svg><circle cx="16" cy="16" r="9" stroke="#111" stroke-width="3"/></svg></button>
        <button aria-label="任务视图"><svg><path stroke="#222" stroke-width="2" d="M6 6v3h12V6M6 27v-4h12v4M7 12h10v8H7zM23 6v8M23 18v9M21 15h4"/></svg></button>
        <button aria-label="Origin"><svg><use href="#origin-logo"/></svg></button>
        <button aria-label="Edge"><svg class="flat"><circle cx="16" cy="16" r="15" fill="#1478c8"/><path fill="#35c1a0" d="M3 9q6-9 16-8 12 3 12 14 0 6-8 6-5 0-4-4 0-6-8-6-5 0-9 5 0-4 1-7z"/><path fill="#0d52a4" d="M2 11q9-3 12 2-5 4-3 10 3 6 11 7Q5 33 1 19q0-5 1-8z"/><path fill="#cfdde3" d="M31 22q-9 4-15 0-3-4 0-8 4 0 3 3 0 4 5 4 4 0 7-2z"/></svg></button>
        <button class="open" aria-label="文件资源管理器"><svg class="flat"><path fill="#d39b25" d="M2 3h11l3 4h-14z"/><path fill="#ffd86c" d="M2 7h28v23H2z"/><path fill="#3d8fcf" d="M7 30V17h18v13h-5v-7h-8v7z"/></svg></button>
        <button aria-label="Mn"><svg><path stroke="#ee2b20" stroke-width="7" d="M4 28L8 5l5 14 8-14 2 13"/><path stroke="#8c8c8f" stroke-width="5" d="M16 29V19q9-4 11 1v9"/></svg></button>
        <button aria-label="Everything"><svg><circle cx="19" cy="12" r="9" stroke="#f0880f" stroke-width="5"/><path stroke="#f0880f" stroke-width="6" d="M12 19L4 29"/></svg></button>
        <button aria-label="Photoshop"><svg class="ps"><path fill="#04202e" stroke="#16a5cf" stroke-width="3" d="M3 2h27v28H3z"/><text x="7" y="21">Ps</text></svg></button>
        <button class="open" aria-label="Zotero"><svg><path fill="#cfcfd1" stroke="#8d8d90" stroke-width="2" d="M16 1l13 7v16l-13 7-13-7V8z"/><path stroke="#c5272a" stroke-width="5" d="M10 9h11L11 23h12"/></svg></button>
        <button class="open" aria-label="Word"><svg class="word"><path fill="#fff" stroke="#2a5699" d="M17 5h13v22H17z"/><path stroke="#2a5699" stroke-width="2" d="M19 10h9M19 14h9M19 18h9M19 22h9"/><path fill="#2a5699" stroke="none" d="M2 5l16-3v28L2 27z"/><text x="3" y="21">W</text></svg></button>
        <button class="open current" aria-label="OriginPro"><svg><use href="#origin-logo"/></svg></button>
        <div class="tray">
            <button aria-label="隐藏的图标"><svg><path d="M1 14l8-8 8 8"/></svg></button>
            <button aria-label="电池"><svg><path fill="#111" d="M4 5h14v10H4z"/><path d="M2 1v5M0 2h5v3M20 8v4"/></svg></button>
            <button aria-label="网络"><svg class="thin"><path d="M2 18Q2 3 18 3M6 18Q6 7 18 7M10 18Q10 11 18 11"/><circle cx="15" cy="16" r="1" fill="#222"/></svg></button>
            <button aria-label="音量"><svg class="thin"><path d="M1 7h3l5-4v14l-5-4H1zM11 8q2 2 0 4M14 6q3 4 0 8"/><path stroke="#888" d="M17 3q5 7 0 14"/></svg></button>
            <button aria-label="输入法"><svg><path stroke-width="4" d="M2 6h16v7H2zM10 1v19"/><path stroke="#f2f5f7" stroke-width="1.500" d="M2 6h16v7H2zM10 1v19"/></svg></button>
            <button class="sogou" aria-label="搜狗">S</button>
        </div>
        <time>18:18<br>2022/4/</time>
    </nav>

    <div class="ime-frame"></div>
    <div class="ime"><span>中</span><svg><path d="M4 2q8 4 1 13 5-6-1-13zM21 4l4-2q2 3 4 0l4 3v4h-3v7h-7V9h-3z"/></svg></div>
</body>

</html>
```
FILE: styles.css
```css
* {
    box-sizing: border-box;
}

body {
    margin: 0;
    height: 100vh;
    display: flex;
    flex-direction: column;
    overflow: hidden;
    background: #f5f5fe;
    color: #333;
    font-family: "Open Sans", "Noto Sans CJK SC", sans-serif;
    font-size: 14px;
}

button {
    flex: none;
    padding: 0;
    border: 0;
    background: none;
    color: inherit;
    font: inherit;
    display: flex;
    align-items: center;
    justify-content: center;
}

svg {
    flex: none;
    width: 16px;
    height: 16px;
    fill: none;
    stroke: currentColor;
}

h1, h2, h3, ul {
    margin: 0;
    padding: 0;
    font-weight: normal;
    list-style: none;
}

.defs {
    position: absolute;
    width: 0;
    height: 0;
}

/* title and menu */
.titlebar {
    flex: none;
    display: flex;
    height: 28px;
    background: #fff;
    border-top: 1px solid #eee;
    overflow: hidden;
}

.titlebar h1 {
    flex: 1;
    margin-left: -9px;
    font-size: 16px;
    line-height: 24px;
    white-space: nowrap;
}

.titlebar button {
    width: 58px;
}

.titlebar button:last-child {
    margin-right: -34px;
}

.menu {
    flex: none;
    display: flex;
    gap: 15px;
    height: 28px;
    margin-left: -22px;
    padding-bottom: 1px;
    background: linear-gradient(90deg, #efedff, #f6f6fe 60%);
    white-space: nowrap;
}

/* toolbars */
.bars {
    flex: none;
    display: flex;
    height: 29px;
    white-space: nowrap;
}

.bar {
    flex: none;
    display: flex;
    align-items: center;
    height: 29px;
    border-radius: 0 0 0 4px;
    background: linear-gradient(#fdfdff, #eeeef8 45%, #b9b9d2);
}

.bar button {
    width: 22px;
    height: 24px;
}

.bar.first {
    padding-left: 2px;
}

.bar.cut {
    margin-left: -11px;
}

.bar .dd {
    width: 9px;
}

.bar .dd.wide {
    width: 13px;
}

.dd::after, .combo::after {
    content: "";
    border: 3px solid transparent;
    border-top: 5px solid #222;
    border-bottom: 0;
}

.off {
    color: #757583;
}

.light {
    color: #a9a9b5;
}

.bar .on, .vbar .on {
    border: 1px solid #3b95d4;
    background: #cde6f7;
}

.sep {
    flex: none;
    width: 8px;
    height: 18px;
    border-left: 1px solid #c8c8da;
    transform: translateX(3px);
}

.sp {
    width: 2px;
}

.grip {
    flex: none;
    width: 10px;
    height: 18px;
    background: radial-gradient(circle, #999 1px, transparent 2px) 0 0 / 8px 4px repeat-y;
}

.bar .more {
    align-self: stretch;
    width: 12px;
    height: auto;
    margin-left: 2px;
    border-radius: 0 4px 4px 0;
    align-items: flex-end;
    padding-bottom: 3px;
    background: linear-gradient(#bdbdd3, #b2b2cc 60%, #dedeec);
}

.more::after {
    content: "";
    width: 7px;
    height: 7px;
    background: linear-gradient(#222, #222) 1px 0 / 5px 1px no-repeat, linear-gradient(#222, #222) 0 2px / 7px 2px no-repeat, linear-gradient(#222, #222) 2px 4px / 3px 2px no-repeat;
}

.combo {
    flex: none;
    display: grid;
    grid-template-columns: auto 1fr 18px;
    align-items: center;
    height: 26px;
    background: linear-gradient(#e2e2ec, #c9c9da) right / 17px 100% no-repeat, #fff;
    font-size: 15px;
}

.combo::after {
    justify-self: center;
}

.combo.off::after {
    opacity: .5;
}

.combo select {
    grid-column: 2;
    min-width: 0;
    appearance: none;
    border: 0;
    background: none;
    color: #555;
    font: inherit;
    padding: 0 0 0 3px;
}

.combo.off {
    border: 1px solid #c5c5cc;
    background: #f4f4f6;
}

.combo.off select {
    color: #888;
}

.combo.zoom {
    width: 71px;
    margin-right: 3px;
}

.combo.font {
    grid-template-columns: auto 1fr 13px;
    width: 156px;
    margin: 0 6px 0 3px;
    background-size: 13px 100%;
    font-size: 14px;
}

.combo.font svg {
    margin-left: 5px;
}

.combo.size {
    width: 72px;
    margin-right: 4px;
}

.combo.line {
    grid-template-columns: auto 1fr 12px;
    width: 74px;
    margin: 0 6px 0 2px;
    font-size: 12px;
}

.combo.line svg {
    width: 30px;
    margin-left: 3px;
}

.combo.line select {
    padding: 0;
}

.bar .swatch {
    width: 37px;
    height: 16px;
    margin-left: 3px;
    border: 1px solid #aab;
    background: #e4e4f0;
}

.glyph {
    font-size: 18px;
}

.serif {
    font-family: "Liberation Serif", serif;
}

.serif sup, .serif sub {
    font-size: 9px;
    align-self: flex-start;
}

.serif sub {
    align-self: flex-end;
}

.big {
    font-size: 22px;
}

.bar .tiny {
    font: 7px "Liberation Mono", monospace;
}

/* main area */
main {
    flex: 1;
    min-height: 0;
    display: flex;
    border-top: 2px solid #9b9ba3;
}

.left {
    flex: 1;
    min-width: 0;
    display: flex;
    flex-direction: column;
}

.mdi {
    flex: 1;
    min-height: 0;
    display: grid;
    grid-template: minmax(0, 1fr) 20px / minmax(0, 1fr) 22px;
    background: #f3eff5;
}

.desktop {
    position: relative;
    overflow: hidden;
    background: #aaa8aa;
}

.scroll-v, .scroll-h {
    display: flex;
    background: #f5f0f6;
    color: #444;
}

.scroll-v {
    flex-direction: column;
    align-items: center;
}

.scroll-v button, .scroll-h button {
    width: 20px;
    height: 20px;
}

.scroll-v path, .scroll-h path {
    stroke-width: 2;
}

.thumb {
    flex: 1;
    align-self: stretch;
    background: #cdcccd;
}

.mdi > .scroll-v {
    padding: 0 2px 2px 0;
}

.mdi > .scroll-v .thumb {
    margin-bottom: 22px;
}

/* child windows */
.window {
    position: absolute;
    display: flex;
    flex-direction: column;
    padding: 0 8px 8px;
    border: 1px solid #626975;
    border-radius: 7px 7px 0 0;
    background: linear-gradient(#bccde1, #d9e5f5 38px);
    color: #9199a3;
}

.window.active {
    border: 2px solid #b23a9c;
    padding: 0 7px 7px;
    background: linear-gradient(#96b4d8, #b9cfeb 38px);
    color: #333;
}

.caption {
    flex: none;
    display: flex;
    align-items: center;
    gap: 3px;
    height: 38px;
    padding: 5px 2px 0 0;
}

.active .caption {
    height: 37px;
}

.caption .ico {
    width: 20px;
    height: 21px;
    stroke: none;
}

.caption h2 {
    flex: 1;
    padding-left: 2px;
    font-size: 15px;
}

.caption button {
    width: 41px;
    height: 24px;
    border: 1px solid #8fa3bd;
    border-radius: 2px;
}

.caption button svg {
    width: 20px;
    height: 20px;
    stroke: none;
}

.caption .close {
    border-color: #7e3020;
    background: linear-gradient(#dd8d77, #c8492c 50%, #d4623f);
}

.client {
    flex: 1;
    min-height: 0;
    display: grid;
    border: 1px solid #7c8591;
    border-right-color: #eef3fa;
    border-bottom-color: #eef3fa;
    background: #c4c1c4;
    overflow: hidden;
}

.page {
    grid-area: 1 / 1;
    width: 553px;
    height: 100%;
    background: #fff;
    stroke: #222;
}

.layer {
    grid-area: 1 / 1;
    width: 24px;
    height: 24px;
    margin: 2px 0 0 1px;
    border: 2px outset #d5d2d5;
    background: #c4c0c2;
    color: #111;
    font: bold 20px "Liberation Sans", sans-serif;
}

.active .layer {
    border: 0;
    margin-top: 0;
}

.axis text {
    text-anchor: middle;
}

#axis-text text, #legend text, .names text, .nine text {
    font: 12px "Liberation Serif", serif;
    fill: #222;
    stroke: none;
}

#axis-text .axis-title, #legend text {
    font-size: 15px;
}

.names text {
    font-size: 13px;
}

.nine text {
    font-size: 11px;
}

.nine .axis-title {
    font-size: 14px;
}

.selection {
    stroke: #3d86b5;
}

.handles {
    fill: #146be2;
    stroke: none;
}

.back {
    left: 155px;
    top: 188px;
    width: 632px;
    height: 434px;
}

.graph2 {
    left: 310px;
    top: 415px;
    width: 632px;
    height: 470px;
}

.graph2 .page {
    width: 550px;
}

.graph9 {
    left: 584px;
    top: 78px;
    width: 600px;
    height: 476px;
}

.graph9 .page {
    width: 100%;
    height: 404px;
}

.graph4 {
    left: 918px;
    top: 347px;
    width: 632px;
    height: 434px;
}

.book {
    left: -10px;
    top: 6px;
    width: 370px;
    height: 321px;
}

.mini {
    width: 200px;
    height: 34px;
    padding: 0 4px;
    background: linear-gradient(#bccde1, #cbdaec);
}

.mini .caption {
    height: 32px;
    padding: 0;
}

.a4 {
    left: -34px;
    top: 791px;
}

.a3 {
    left: 167px;
    top: 791px;
}

.low {
    top: 824px;
}

.cursor {
    position: absolute;
    left: 1277px;
    top: 380px;
    width: 16px;
    height: 24px;
}

/* worksheet */
.book .client {
    grid-template-rows: minmax(0, 1fr) 21px;
    background: #f5f0f6;
}

.book h2 {
    padding: 0;
}

.sheet {
    display: grid;
    grid-template-columns: 328px 1fr;
    overflow: hidden;
    border-bottom: 1px solid #555;
}

.sheet table {
    table-layout: fixed;
    width: 335px;
    border-collapse: collapse;
    background: #000;
    color: #dcdcdc;
    font: 15px "Liberation Serif", "Noto Sans CJK SC", serif;
    clip-path: inset(0 7px 0 0);
    align-self: start;
}

.sheet th, .sheet td {
    height: 20px;
    padding: 0 4px;
    border: 1px solid #3a3a3a;
    font-weight: normal;
    line-height: 18px;
    text-align: right;
}

.sheet th {
    background: #1a1c18;
    border-color: #bbb;
}

.sheet tbody th {
    border-right: 2px solid #ddd;
}

.sheet thead th {
    height: 30px;
    text-align: center;
}

.sheet thead .corner {
    width: 83px;
    background: #dfe3e7;
}

.sheet .info td {
    background: #00063a;
    border-color: #2c3358;
    color: #fff;
    font-weight: bold;
    text-align: center;
}

.sheet .scroll-v .thumb {
    flex: none;
    height: 22px;
    margin-bottom: auto;
}

.tabs {
    display: flex;
    background: #fff;
}

.tabs .next {
    width: 17px;
    border: 1px outset #ccc;
    background: #e4e0e5;
}

.next::after {
    content: "";
    border: 4px solid transparent;
    border-left: 5px solid #444;
    border-right: 0;
}

.tab {
    font: 18px "Liberation Mono", monospace;
    color: #222;
}

.tab svg {
    width: 10px;
    height: 20px;
}

.tabs .fill {
    flex: 1;
    border-right: 3px double #333;
    background: #cfcacf;
}

.tabs .scroll-h {
    width: 83px;
    margin-left: 3px;
    border-right: 2px solid #555;
}

.tabs .scroll-h .thumb {
    flex: none;
    width: 21px;
    margin-right: auto;
}

.size-grip {
    margin: 0 2px 0 6px;
}

/* right docks */
.dock {
    flex: none;
    width: 28px;
    padding: 0 1px;
    background: #ededfb;
}

.vbar {
    display: flex;
    flex-direction: column;
    align-items: center;
    margin-bottom: 4px;
    background: linear-gradient(90deg, #fbfbff, #e4e4f3 50%, #b9b9d4);
}

.vbar button {
    width: 22px;
    height: 22px;
}

.vbar .sep {
    width: 18px;
    height: 8px;
    border: 0;
    border-top: 1px solid #c8c8da;
    transform: translateY(3px);
}

.vbar .grip {
    width: 18px;
    height: 7px;
    background: radial-gradient(circle, #999 1px, transparent 2px) 0 0 / 4px 6px repeat-x;
}

.vbar .more {
    height: 14px;
    width: 100%;
    background: linear-gradient(90deg, #dedeee, #b0b0cc);
    justify-content: flex-end;
    padding-right: 4px;
}

.vbar .more::after {
    transform: rotate(-90deg);
}

.panels {
    flex: none;
    display: flex;
    flex-direction: column;
    gap: 5px;
    width: 98px;
    padding-left: 4px;
    background: #f4f0f8;
    overflow: hidden;
}

.panels h3 {
    height: 28px;
    padding-left: 4px;
    background: linear-gradient(#d5deec, #b9c8de);
    font-size: 15px;
    line-height: 25px;
    white-space: nowrap;
}

.panels .tree h3 {
    font-size: 16px;
}

.tree ul {
    height: 144px;
    border: 2px solid #8e8e92;
    border-right: 0;
    background: #fff;
    overflow: hidden;
}

.tree li {
    display: flex;
    align-items: center;
    gap: 3px;
    height: 22px;
    padding-left: 3px;
    font-size: 14px;
    white-space: nowrap;
}

.tree .selected {
    background: #0b78d8;
    color: #fff;
}

.tree li svg {
    width: 20px;
    height: 16px;
    stroke: none;
    margin-right: 1px;
}

.tree .l1 {
    padding-left: 19px;
}

.tree .l2 {
    padding-left: 35px;
}

.tree .l3 {
    padding-left: 65px;
}

.tree label {
    display: flex;
    align-items: center;
    gap: 3px;
}

.tree .l3 label {
    gap: 0;
}

.fold {
    flex: none;
    width: 11px;
    height: 11px;
    border: 1px solid #9ab;
    background: linear-gradient(#336, #336) center / 7px 2px no-repeat, #fff;
}

.tree input {
    appearance: none;
    flex: none;
    display: grid;
    place-items: center;
    width: 17px;
    height: 17px;
    margin: 0;
    border: 1px solid #444;
    background: #fff;
}

.tree input:checked::after {
    content: "";
    width: 10px;
    height: 5px;
    border: solid #444;
    border-width: 0 0 2px 2px;
    transform: rotate(-45deg);
}

.apps {
    flex: 1;
    min-height: 0;
    display: flex;
    flex-direction: column;
}

.apps-body {
    flex: 1;
    min-height: 0;
    display: flex;
}

.apps-side {
    flex: none;
    width: 30px;
    padding-top: 2px;
    border-right: 1px solid #777;
}

.apps-side > button {
    width: 30px;
    height: 16px;
}

.apps-side svg {
    width: 10px;
    height: 10px;
    fill: #222;
    stroke: none;
}

.apps-side .side-tab {
    display: grid;
    place-items: center;
    height: 57px;
    font-size: 15px;
}

.apps-side .link {
    height: 66px;
    margin-top: -5px;
}

.side-tab svg {
    grid-area: 1 / 1;
    width: 30px;
    height: 100%;
    fill: #f8f5fa;
    stroke: #777;
}

.side-tab span {
    grid-area: 1 / 1;
    padding-left: 4px;
    writing-mode: vertical-rl;
    text-orientation: sideways;
}

.all {
    font-weight: bold;
}

.apps ul {
    flex: 1;
    padding-top: 4px;
    background: #fff;
    overflow: hidden;
}

.apps li {
    width: 96px;
    height: 94px;
}

.apps a {
    display: flex;
    flex-direction: column;
    align-items: center;
    color: #333;
    font-size: 15px;
    line-height: 21px;
    text-align: center;
    text-decoration: none;
    white-space: nowrap;
}

.apps li svg {
    width: 42px;
    height: 40px;
    margin-bottom: 3px;
    stroke: none;
}

.pub {
    font: bold 9px "Liberation Sans", sans-serif;
    fill: #fff;
}

/* bottom */
.bottom {
    height: 31px;
}

.plot {
    margin-left: -4px;
}

.status {
    flex: none;
    display: flex;
    align-items: stretch;
    height: 27px;
    background: #f5f1f6;
    border-top: 1px solid #ddd;
    font-size: 15px;
    line-height: 26px;
    white-space: nowrap;
}

.msg {
    flex: 1;
    margin-left: -12px;
}

.cell {
    padding: 0 4px;
    border-left: 1px solid #ccc;
    font-size: 14px;
}

.cell.gap {
    padding-right: 3px;
}

.grids {
    width: 135px;
}

.taskbar {
    flex: none;
    display: flex;
    height: 48px;
    background: linear-gradient(90deg, #d3dcdf, #cddde6 60%, #d7dce2);
}

.search {
    width: 393px;
    padding: 0 0 3px 14px;
    border: 0;
    background: #fff;
    font: 19px "Noto Sans CJK SC", sans-serif;
}

.search::placeholder {
    color: #444;
}

.taskbar > button {
    width: 62px;
    padding-top: 3px;
    border-bottom: 3px solid transparent;
}

.taskbar > button svg {
    width: 32px;
    height: 32px;
    stroke-linejoin: round;
}

.taskbar .flat {
    stroke: none;
}

.taskbar .open {
    background: linear-gradient(#1c68b0, #1c68b0) bottom / 50px 3px no-repeat border-box;
}

.taskbar .current {
    background: linear-gradient(#1c68b0, #1c68b0) bottom / 100% 3px no-repeat border-box, #eef2f7;
}

.ps text {
    font: bold 15px "Open Sans", sans-serif;
    fill: #2fc3f0;
    stroke: none;
}

.word text {
    font: bold 14px "Open Sans", sans-serif;
    fill: #fff;
    stroke: none;
}

.tray {
    display: flex;
    align-items: center;
    gap: 10px;
    margin-left: auto;
    padding: 0 22px 3px 0;
}

.tray svg {
    width: 20px;
    height: 20px;
    color: #222;
    stroke-width: 2;
}

.tray .thin {
    stroke-width: 1;
}

.tray .sogou {
    width: 19px;
    height: 19px;
    margin-left: 6px;
    border-radius: 3px;
    background: #e96a2c;
    color: #fff;
    font: bold 18px "Liberation Sans", sans-serif;
    transform: rotate(-8deg);
}

time {
    width: 54px;
    padding-top: 1px;
    font-size: 15px;
    line-height: 23px;
    text-align: right;
    white-space: nowrap;
    overflow: hidden;
}

/* floating input method bar */
.ime, .ime-frame {
    position: absolute;
    right: 0;
    bottom: 52px;
    width: 66px;
    height: 60px;
}

.ime-frame {
    bottom: 60px;
    width: 71px;
    height: 47px;
    border: 1px solid #333;
    border-width: 1px 0 0 1px;
}

.ime {
    display: flex;
    align-items: center;
    gap: 8px;
    padding-left: 14px;
    background: #000;
    clip-path: polygon(0 17px, 15px 0, 100% 0, 100% 100%, 0 100%);
    color: #eee;
    font-size: 15px;
}

.ime svg {
    width: 40px;
    fill: #eee;
    stroke: none;
}
```
